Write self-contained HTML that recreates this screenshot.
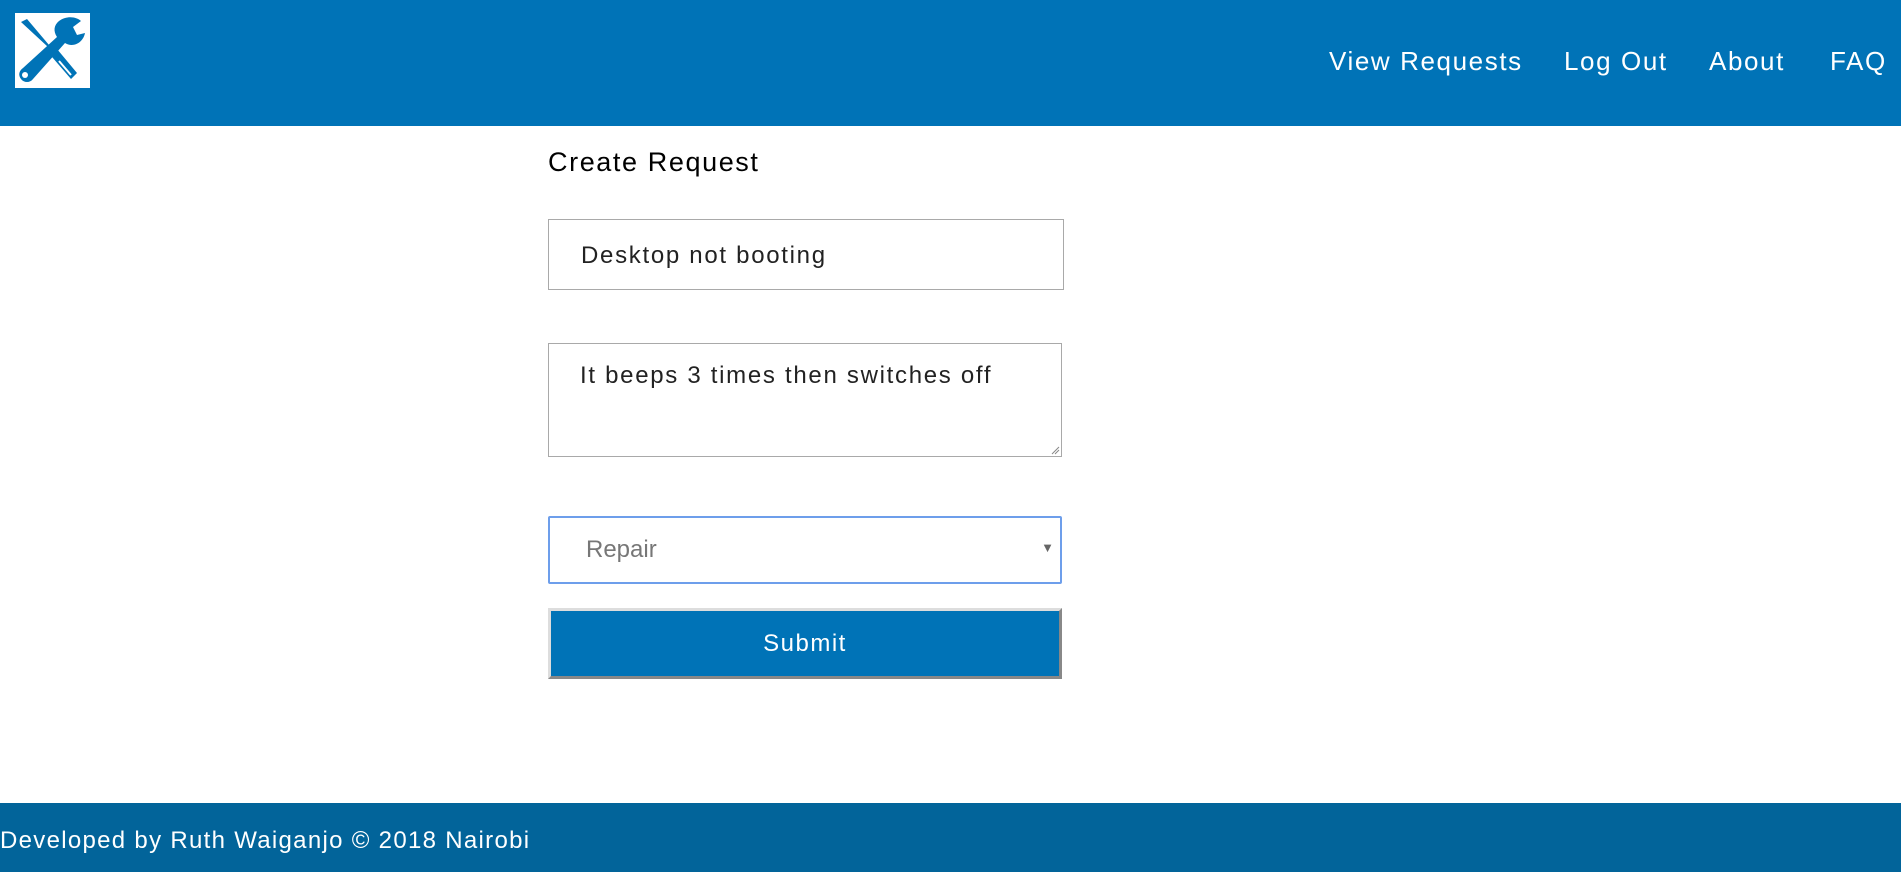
<!DOCTYPE html>
<html><head><style>
*{margin:0;padding:0;box-sizing:border-box}
body{width:1901px;height:872px;position:relative;background:#fff;font-family:"Liberation Sans",sans-serif;overflow:hidden}
header{position:absolute;left:0;top:0;width:1901px;height:126px;background:#0073b7}
.logo{position:absolute;left:15px;top:13px;width:75px;height:75px;background:#fff}
nav a{position:absolute;top:46px;color:#fff;font-size:26px;text-decoration:none;letter-spacing:1.6px}
h2{position:absolute;left:548px;top:147px;font-size:27px;font-weight:normal;color:#000;letter-spacing:1.6px}
.box{position:absolute;border:1px solid #a9a9a9;background:#fff;font-size:24px;color:#222;letter-spacing:1.7px}
.sel{position:absolute;left:548px;top:516px;width:514px;height:68px;border:2px solid #6d9eeb;border-radius:2px}
.btn{position:absolute;left:548px;top:608px;width:514px;height:71px;background:#0073b7;border:3px solid;border-color:#ddd #888 #888 #ddd;color:#fff;font-size:24px;text-align:center;line-height:65px;letter-spacing:1.5px}
footer{position:absolute;left:0;top:803px;width:1901px;height:69px;background:#02649a;color:#fff;font-size:24px;line-height:76px;letter-spacing:1.3px}
</style></head><body>
<header>
<div class="logo"><svg width="75" height="75" viewBox="0 0 75 75">
<g fill="#0073b7">
<path d="M6 9 L12 6 L34 32 L37 30 L62 60 L56 66 L31 37 L33 34 Z"/>
<path d="M44 8 C52 2 62 4 66 8 L58 14 L62 22 L70 20 C68 30 58 35 50 30 L18 66 C15 70 9 70 6 66 C3 62 4 58 8 55 L42 24 C38 18 39 12 44 8 Z"/>
</g>
<circle cx="10" cy="62" r="3" fill="#fff"/>
<path d="M44 48 L56 62" stroke="#fff" stroke-width="2"/>
</svg></div>
<nav>
<a style="left:1329px">View Requests</a>
<a style="left:1564px">Log Out</a>
<a style="left:1709px">About</a>
<a style="left:1830px">FAQ</a>
</nav>
</header>
<h2>Create Request</h2>
<div class="box" style="left:548px;top:219px;width:516px;height:71px;padding:22px 0 0 32px">Desktop not booting</div>
<div class="box" style="left:548px;top:343px;width:514px;height:114px;padding:18px 0 0 31px">It beeps 3 times then switches off
<svg style="position:absolute;right:1px;bottom:1px" width="10" height="10"><path d="M2 9 L9 2 M5 9 L9 5" stroke="#888" stroke-width="1"/></svg></div>
<div class="sel"><span style="position:absolute;left:36px;top:18px;font-size:24px;color:#777">Repair</span><span style="position:absolute;right:6px;top:22px;font-size:13px;color:#666">▼</span></div>
<div class="btn">Submit</div>
<footer>Developed by Ruth Waiganjo © 2018 Nairobi</footer>
</body></html>
